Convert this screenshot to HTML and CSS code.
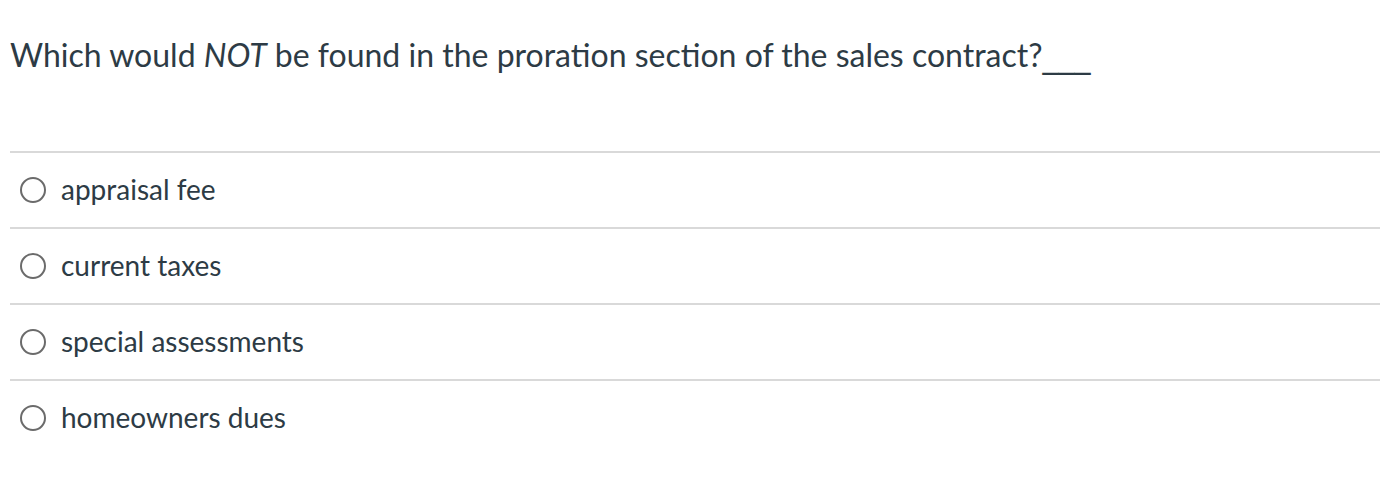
FILE: index.html
```html
<!DOCTYPE html>
<html>
<head>
<meta charset="utf-8">
<link rel="stylesheet" href="styles.css">
</head>
<body>
<div class="question">
  <p class="prompt">Which would <em>NOT</em> be found in the proration section of the sales contract?<span class="blank">___</span></p>
  <div class="answers">
    <label class="answer"><span class="radio"></span><span class="label">appraisal fee</span></label>
    <label class="answer"><span class="radio"></span><span class="label">current taxes</span></label>
    <label class="answer"><span class="radio"></span><span class="label">special assessments</span></label>
    <label class="answer"><span class="radio"></span><span class="label">homeowners dues</span></label>
  </div>
</div>
</body>
</html>
```

FILE: styles.css
```css
html, body {
  margin: 0;
  padding: 0;
  background: #ffffff;
}
body {
  font-family: Lato, "Noto Sans", sans-serif;
  color: #2d3b45;
}
.question {
  padding-left: 10px;
}
.prompt {
  margin: 0;
  padding-top: 35px;
  font-size: 32px;
  line-height: 40px;
  height: 116px;
}
.prompt em {
  font-style: italic;
}
.blank {
  font-family: "DejaVu Sans", sans-serif;
}
.answers {
  display: flex;
  flex-direction: column;
}
.answer {
  display: flex;
  align-items: center;
  height: 74px;
  border-top: 2px solid #d9d9d9;
  font-size: 28px;
}
.radio {
  width: 22px;
  height: 22px;
  border: 2px solid #6b6b6b;
  border-radius: 50%;
  margin-left: 10px;
  margin-right: 15px;
  flex: none;
}
.label {
  line-height: 32px;
  margin-bottom: 3px;
}
```
